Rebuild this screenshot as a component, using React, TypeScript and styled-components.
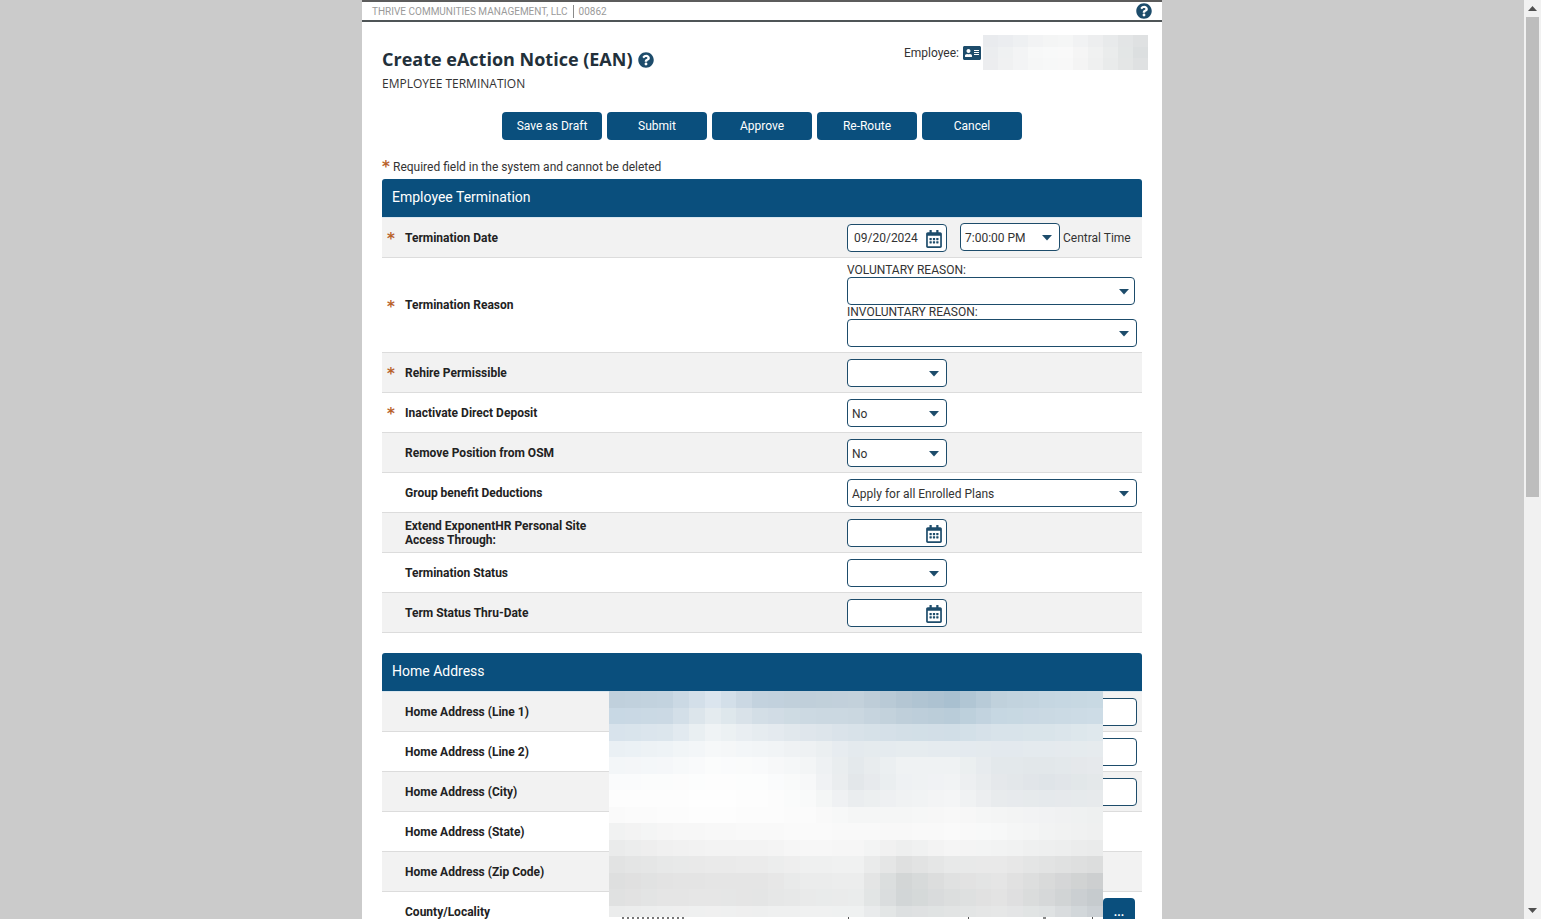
import React from 'react'
import styled, { createGlobalStyle } from 'styled-components'
import { FaQuestionCircle, FaAddressCard, FaRegCalendarAlt } from 'react-icons/fa'

const NAVY = '#0a4f7d'
const INK = '#1d4c6b'

const GlobalStyle = createGlobalStyle`
  html, body {
    margin: 0;
    height: 100%;
    overflow: hidden;
    background: #cbcbcb;
    font-family: Roboto, "Liberation Sans", sans-serif;
    font-size: 12px;
    color: #333;
  }
`

const mixHex = (a: string, b: string, t: number) => {
  const channel = (hex: string, i: number) => parseInt(hex.slice(i, i + 2), 16)
  const out = [0, 2, 4].map((i) =>
    Math.round(channel(a, i) * (1 - t) + channel(b, i) * t)
      .toString(16)
      .padStart(2, '0'),
  )
  return `#${out.join('')}`
}

interface MosaicProps {
  table: string[]
  columns: number
  width: number
  height: number
}

// pixelated patch, control colours get interpolated across the columns
const MosaicArt = ({ table, columns, width, height }: MosaicProps) => {
  const cellW = width / columns
  const cellH = height / table.length
  return (
    <svg width={width} height={height} shapeRendering="crispEdges" style={{ display: 'block' }}>
      {table.map((row, y) => {
        const stops = row.split(' ')
        return Array.from({ length: columns }, (_, x) => {
          const pos = (x / (columns - 1)) * (stops.length - 1)
          const i = Math.min(Math.floor(pos), stops.length - 2)
          return (
            <rect
              key={`${x}-${y}`}
              x={x * cellW}
              y={y * cellH}
              width={cellW + 0.5}
              height={cellH + 0.5}
              fill={mixHex(stops[i], stops[i + 1], pos - i)}
            />
          )
        })
      })}
    </svg>
  )
}

const ADDRESS_PATCH = [
  'c0d0dc c3d3df dbe5ee c3d2de c0cfda c3d1db b4c6d3 a9c0d0 c0d1dc c5d6e1 c8d9e3',
  'c8d8e4 cbd9e4 e4ebef d3dee6 ccd9e2 cad7e0 bfcfda b9ccd9 c6d7e2 cad9e3 cddce6',
  'd8e3ec dce6ed eff3f5 e6ecf0 dfe6ec d8e2e9 d3dfe7 d1dee7 d8e3ea d9e4ea dfe8ed',
  'eaf0f4 eef3f6 f6f8f9 f2f5f7 eef1f3 e4eaee e6ecef e5ebef e3e9ee e4eaee e6ebee',
  'f3f6f8 f5f7f9 fbfcfc f9fafb f3f5f6 e4e9ec eff2f3 eff2f3 e3e8eb e2e7ea e6e9ec',
  'fafbfc fbfcfc fdfdfd fcfdfd f7f8f9 e3e7ea eef1f3 f1f3f4 e5e8eb dfe4e8 e4e8ea',
  'fdfdfd fdfdfd fefefe fdfdfd f9fafa eaedef f0f2f3 f4f5f6 e8ebed e5e9ec e7eaec',
  'fafafa fcfcfc fdfdfd fcfcfc fbfbfb f5f6f6 f5f6f6 f8f8f8 f4f5f5 f1f2f3 eef0f0',
  'f1f2f2 f6f6f6 f8f8f8 f9f9f9 fafafa f9f9f9 f8f8f8 fafafa f7f8f8 f2f3f3 eff0f0',
  'eaebeb f0f0f0 f3f3f3 f3f3f3 f7f7f7 f6f6f6 eeefef f5f5f5 f2f3f3 eeefef eaebeb',
  'e2e3e3 e7e8e8 eaeaea ebebeb eff0f0 f0f1f1 dfe0e0 e8e9e9 e9e9e9 e2e3e3 dcdddd',
  'dedfdf e3e3e3 e5e5e5 e5e5e5 ebecec eceded d3d6d6 e0e1e1 e5e5e5 d9dada cdcfd0',
  'e0e1e1 e5e5e5 e6e6e6 e4e5e5 e9eaea eaecec d2d6d7 dcdede e3e3e3 d6d8d9 c6cbce',
  'ebecec eeefef f0f0f0 eeefef f0f1f1 eff1f1 dde0e1 e2e4e4 e6e7e7 dfe2e3 ccd1d5',
]

const NAME_PATCH = [
  'e9ebee edeff1 f3f4f5 f5f6f6 eff0f1 e6e8e9 dfe1e2',
  'ebedef f2f3f4 f8f9f9 f9f9f9 f2f3f3 e8eaea dcdfe0',
  'ecedef f2f3f4 f7f8f8 f8f8f8 f1f2f2 e7e9e9 dfe1e2',
]

const CaretIcon = () => (
  <svg width="10" height="6" viewBox="0 0 10 6">
    <path d="M0 0h10L5 5.6z" fill={INK} />
  </svg>
)

const Select = ({ width, value, tight }: { width: number; value?: string; tight?: boolean }) => (
  <SelectBox $width={width} $tight={tight}>
    <FieldText>{value}</FieldText>
    <CaretIcon />
  </SelectBox>
)

const DateField = ({ value }: { value?: string }) => (
  <DateBox $width={100}>
    <FieldText>{value}</FieldText>
    <FaRegCalendarAlt size={18} color={INK} />
  </DateBox>
)

const Row = ({
  label,
  required,
  children,
}: {
  label: React.ReactNode
  required?: boolean
  children?: React.ReactNode
}) => (
  <RowBox>
    <Star>{required ? '*' : ''}</Star>
    <RowLabel>{label}</RowLabel>
    <RowValue>{children}</RowValue>
  </RowBox>
)

const App = () => (
  <Shell>
    <GlobalStyle />
    <Viewport>
      <Sheet>
        <TopBar>
          <CompanyName>THRIVE COMMUNITIES MANAGEMENT, LLC</CompanyName>
          <CompanyCode>00862</CompanyCode>
          <TopHelp>
            <FaQuestionCircle size={16} color={INK} />
          </TopHelp>
        </TopBar>

        <Content>
          <TitleRow>
            <div>
              <Title>
                Create eAction Notice (EAN)
                <FaQuestionCircle size={16} color={INK} />
              </Title>
              <Subtitle>EMPLOYEE TERMINATION</Subtitle>
            </div>
            <EmployeeBox>
              Employee:
              <FaAddressCard size={18} color={INK} />
              <MosaicArt table={NAME_PATCH} columns={11} width={165} height={35} />
            </EmployeeBox>
          </TitleRow>

          <Actions>
            <ActionButton>Save as Draft</ActionButton>
            <ActionButton>Submit</ActionButton>
            <ActionButton>Approve</ActionButton>
            <ActionButton>Re-Route</ActionButton>
            <ActionButton>Cancel</ActionButton>
          </Actions>

          <RequiredNote>
            <NoteStar>*</NoteStar>
            Required field in the system and cannot be deleted
          </RequiredNote>

          <Section>
            <SectionHeader>Employee Termination</SectionHeader>
            <RowList>
              <Row label="Termination Date" required>
                <DateField value="09/20/2024" />
                <TimeSlot>
                  <Select width={100} value="7:00:00 PM" />
                </TimeSlot>
                <ZoneText>Central Time</ZoneText>
              </Row>
              <TallRow>
                <Star>*</Star>
                <RowLabel>Termination Reason</RowLabel>
                <ReasonStack>
                  <ReasonLabel>VOLUNTARY REASON:</ReasonLabel>
                  <Select width={288} tight />
                  <ReasonLabel>INVOLUNTARY REASON:</ReasonLabel>
                  <Select width={290} />
                </ReasonStack>
              </TallRow>
              <Row label="Rehire Permissible" required>
                <Select width={100} />
              </Row>
              <Row label="Inactivate Direct Deposit" required>
                <Select width={100} value="No" />
              </Row>
              <Row label="Remove Position from OSM">
                <Select width={100} value="No" />
              </Row>
              <Row label="Group benefit Deductions">
                <Select width={290} value="Apply for all Enrolled Plans" />
              </Row>
              <Row label="Extend ExponentHR Personal Site Access Through:">
                <DateField />
              </Row>
              <Row label="Termination Status">
                <Select width={100} />
              </Row>
              <Row label="Term Status Thru-Date">
                <DateField />
              </Row>
            </RowList>
          </Section>

          <Section>
            <SectionHeader>Home Address</SectionHeader>
            <RowList>
              <Row label="Home Address (Line 1)">
                <FieldBox $width={290} />
              </Row>
              <Row label="Home Address (Line 2)">
                <FieldBox $width={290} />
              </Row>
              <Row label="Home Address (City)">
                <FieldBox $width={290} />
              </Row>
              <Row label="Home Address (State)" />
              <Row label="Home Address (Zip Code)" />
              <Row label="County/Locality">
                <MoreButton>...</MoreButton>
              </Row>
              <MosaicCover>
                <MosaicArt table={ADDRESS_PATCH} columns={31} width={494} height={231} />
              </MosaicCover>
              <CutOffText />
            </RowList>
          </Section>
        </Content>
      </Sheet>
    </Viewport>

    <ScrollTrack>
      <ScrollArrow viewBox="0 0 9 5">
        <path d="M4.5 0L9 5H0z" fill="#505050" />
      </ScrollArrow>
      <ScrollThumb />
      <ScrollArrow viewBox="0 0 9 5">
        <path d="M0 0h9L4.5 5z" fill="#505050" />
      </ScrollArrow>
    </ScrollTrack>
  </Shell>
)

const Shell = styled.div`
  display: flex;
  height: 100vh;
  overflow: hidden;
`

const Viewport = styled.div`
  flex: 1;
  min-width: 0;
  overflow: hidden;
`

const Sheet = styled.div`
  width: 800px;
  margin: 0 auto;
  background: #fff;
`

const TopBar = styled.div`
  display: flex;
  align-items: center;
  box-sizing: border-box;
  height: 22px;
  padding: 0 10px;
  border-top: 2px solid #5c5c5c;
  border-bottom: 2px solid #4f5557;
  font-size: 10px;
  color: #9a9a9a;
`

const CompanyName = styled.span`
  padding-right: 5px;
  border-right: 1px solid #8a8a8a;
  line-height: 13px;
`

const CompanyCode = styled.span`
  padding-left: 5px;
`

const TopHelp = styled.span`
  display: flex;
  margin-left: auto;
`

const Content = styled.div`
  padding: 0 20px;
`

const TitleRow = styled.div`
  display: flex;
  justify-content: space-between;
  align-items: flex-start;
  height: 90px;
`

const Title = styled.h1`
  display: flex;
  align-items: center;
  gap: 5px;
  margin: 25px 0 0;
  font-family: "Open Sans", sans-serif;
  font-size: 18px;
  line-height: 24px;
  font-weight: 700;
  color: #22303a;

  svg {
    margin-top: 2px;
  }
`

const Subtitle = styled.div`
  margin-top: 5px;
  font-family: "Open Sans", sans-serif;
  font-size: 12px;
  line-height: 16px;
  color: #333;
`

const EmployeeBox = styled.div`
  display: flex;
  align-items: center;
  gap: 4px;
  margin: 13px -6px 0 0;
  color: #333;

  svg:last-child {
    margin-left: -2px;
  }
`

const Actions = styled.div`
  display: flex;
  justify-content: center;
  gap: 5px;
`

const ActionButton = styled.button`
  width: 100px;
  height: 28px;
  padding: 0;
  border: 0;
  border-radius: 4px;
  background: ${NAVY};
  color: #fff;
  font-family: Roboto, sans-serif;
  font-size: 12px;
  font-weight: 400;
`

const RequiredNote = styled.div`
  display: flex;
  align-items: center;
  height: 39px;
  padding-top: 14px;
  box-sizing: border-box;
  color: #333;
`

const NoteStar = styled.span`
  width: 11px;
  font-family: "DejaVu Sans", sans-serif;
  font-size: 15px;
  font-weight: 700;
  line-height: 12px;
  color: #b9622b;
`

const Section = styled.section`
  margin-bottom: 20px;
`

const SectionHeader = styled.h2`
  box-sizing: border-box;
  height: 39px;
  margin: 0;
  padding: 0 10px;
  border-radius: 3px 3px 0 0;
  border-bottom: 1px solid #dbe7ef;
  background: ${NAVY};
  color: #fff;
  font-size: 14px;
  font-weight: 400;
  line-height: 37px;
`

const RowBox = styled.div`
  display: grid;
  grid-template-columns: 23px 442px 1fr;
  align-items: center;
  box-sizing: border-box;
  height: 40px;
  border-bottom: 1px solid #dcdcdc;
  background: #fff;
`

const TallRow = styled(RowBox)`
  height: 95px;
`

const RowList = styled.div`
  position: relative;

  & > ${RowBox}:nth-child(odd) {
    background: #f2f2f2;
  }
`

const Star = styled.span`
  margin-top: 3px;
  padding-left: 5px;
  font-family: "DejaVu Sans", sans-serif;
  font-size: 15px;
  font-weight: 700;
  line-height: 12px;
  color: #b9622b;
`

const RowLabel = styled.div`
  max-width: 190px;
  font-weight: 700;
  line-height: 14px;
  color: #222;
`

const RowValue = styled.div`
  display: flex;
  align-items: center;
`

const FieldBox = styled.div<{ $width: number }>`
  display: flex;
  align-items: center;
  justify-content: space-between;
  box-sizing: border-box;
  width: ${({ $width }) => $width}px;
  height: 28px;
  border: 1px solid ${INK};
  border-radius: 4px;
  background: #fff;
`

const SelectBox = styled(FieldBox)<{ $tight?: boolean }>`
  padding: 2px ${({ $tight }) => ($tight ? 5 : 7)}px 0 4px;
`

const DateBox = styled(FieldBox)`
  padding: 0 3px 0 6px;

  svg {
    margin-top: 2px;
  }
`

const FieldText = styled.span`
  color: #333;
`

const TimeSlot = styled.span`
  margin: 0 0 1px 13px;
`

const ZoneText = styled.span`
  margin-left: 3px;
  color: #333;
`

const ReasonStack = styled.div`
  display: flex;
  flex-direction: column;
  align-items: flex-start;
`

const ReasonLabel = styled.div`
  height: 14px;
  line-height: 14px;
  color: #333;
`

const MosaicCover = styled.div`
  position: absolute;
  top: -1px;
  left: 227px;
  height: 226px;
  overflow: hidden;
`

// tops of the text that peek out below the pixelated patch
const CutOffText = styled.div`
  position: absolute;
  top: 225px;
  left: 227px;
  width: 494px;
  height: 2px;
  background:
    repeating-linear-gradient(90deg, #777 0 2px, transparent 2px 5px) 13px 0 / 63px 2px no-repeat,
    linear-gradient(#555, #555) 239px 0 / 1px 2px no-repeat,
    linear-gradient(#555, #555) 359px 0 / 1px 2px no-repeat,
    linear-gradient(#888, #888) 434px 0 / 3px 2px no-repeat,
    linear-gradient(#555, #555) 483px 0 / 1px 2px no-repeat;
`

const MoreButton = styled.button`
  width: 32px;
  height: 28px;
  margin-left: 256px;
  padding: 0;
  border: 0;
  border-radius: 4px;
  background: ${NAVY};
  color: #fff;
  font-family: Roboto, sans-serif;
  font-size: 12px;
  font-weight: 700;
`

const ScrollTrack = styled.div`
  display: flex;
  flex-direction: column;
  align-items: center;
  width: 17px;
  flex: none;
  background: #f1f1f1;
`

const ScrollArrow = styled.svg`
  width: 9px;
  height: 5px;
  margin: 6px 0;
  flex: none;

  &:last-child {
    margin-top: auto;
  }
`

const ScrollThumb = styled.div`
  width: 13px;
  height: 480px;
  background: #bdbdbd;
`

export default App
